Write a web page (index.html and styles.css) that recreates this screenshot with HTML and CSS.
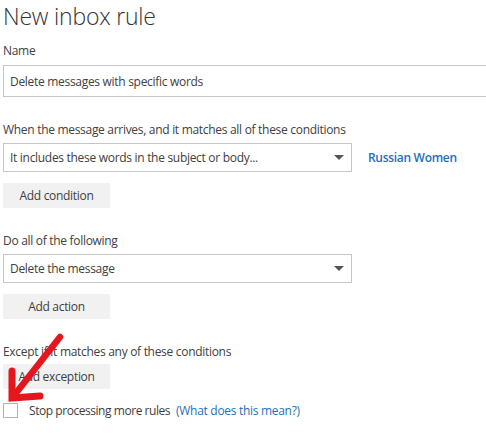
FILE: index.html
```html
<!DOCTYPE html>
<html>
<head>
<meta charset="utf-8">
<link rel="stylesheet" href="styles.css">
</head>
<body>
<div class="page">
  <h1 class="title">New inbox rule</h1>
  <div class="label label-name">Name</div>
  <div class="textbox">Delete messages with specific words</div>

  <div class="label label-section">When the message arrives, and it matches all of these conditions</div>
  <div class="row">
    <div class="select">
      <span>It includes these words in the subject or body...</span>
      <span class="caret"></span>
    </div>
    <a class="link-strong">Russian Women</a>
  </div>
  <div class="btn btn-after-select">Add condition</div>

  <div class="label label-section">Do all of the following</div>
  <div class="select">
    <span>Delete the message</span>
    <span class="caret"></span>
  </div>
  <div class="btn btn-after-select">Add action</div>

  <div class="label label-section label-tight">Except if it matches any of these conditions</div>
  <div class="btn">Add exception</div>

  <div class="check-row">
    <span class="checkbox"></span>
    <span class="check-text">Stop processing more rules</span>
    <a class="link">(What does this mean?)</a>
  </div>

  <svg class="arrow" width="70" height="75" viewBox="0 0 70 75">
    <path d="M60 4 L16 60" stroke="#e3171d" stroke-width="6.5" stroke-linecap="round" fill="none"/>
    <path d="M12 38 L12 65 L40 63" stroke="#e3171d" stroke-width="7" stroke-linecap="round" stroke-linejoin="miter" fill="none"/>
  </svg>
</div>
</body>
</html>
```

FILE: styles.css
```css
html, body {
  margin: 0;
  padding: 0;
  background: #ffffff;
}
body {
  font-family: "Open Sans", "Noto Sans", sans-serif;
  font-size: 12px;
  letter-spacing: -0.3px;
  color: #404040;
  overflow: hidden;
}
.page {
  position: relative;
  padding: 0 0 0 3px;
  width: 600px;
}
.title {
  margin: 0;
  font-weight: 300;
  font-size: 23px;
  line-height: 32px;
  height: 30px;
  color: #333333;
  letter-spacing: -0.2px;
}
.label {
  line-height: 16px;
  height: 16px;
}
.label-name {
  margin-top: 13px;
}
.textbox {
  margin-top: 6px;
  width: 560px;
  border: 1px solid #c6c6c6;
  box-sizing: border-box;
  height: 32px;
  line-height: 31px;
  padding-left: 6px;
}
.label-section {
  margin-top: 25px;
}
.row {
  display: flex;
  align-items: center;
  margin-top: 5px;
}
.select {
  display: flex;
  align-items: center;
  justify-content: space-between;
  width: 349px;
  height: 29px;
  box-sizing: border-box;
  border: 1px solid #c6c6c6;
  padding: 0 7px 0 6px;
}
.label-section + .select {
  margin-top: 5px;
}
.caret {
  width: 0;
  height: 0;
  border-left: 5px solid transparent;
  border-right: 5px solid transparent;
  border-top: 5px solid #555555;
}
.link-strong {
  margin-left: 16px;
  font-weight: 600;
  color: #1f6fba;
}
.btn {
  width: 107px;
  height: 25px;
  line-height: 25px;
  background: #f1f1f1;
  text-align: center;
  margin-top: 4px;
}
.btn-after-select {
  margin-top: 11px;
}
.check-row {
  display: flex;
  align-items: center;
  margin-top: 13px;
}
.checkbox {
  width: 15px;
  height: 15px;
  box-sizing: border-box;
  border: 1px solid #b3b3b3;
  background: #ffffff;
}
.check-text {
  margin-left: 11px;
  letter-spacing: -0.45px;
}
.link {
  margin-left: 6px;
  color: #1f6fba;
}
.arrow {
  position: absolute;
  left: 0;
  top: 333px;
}
```
